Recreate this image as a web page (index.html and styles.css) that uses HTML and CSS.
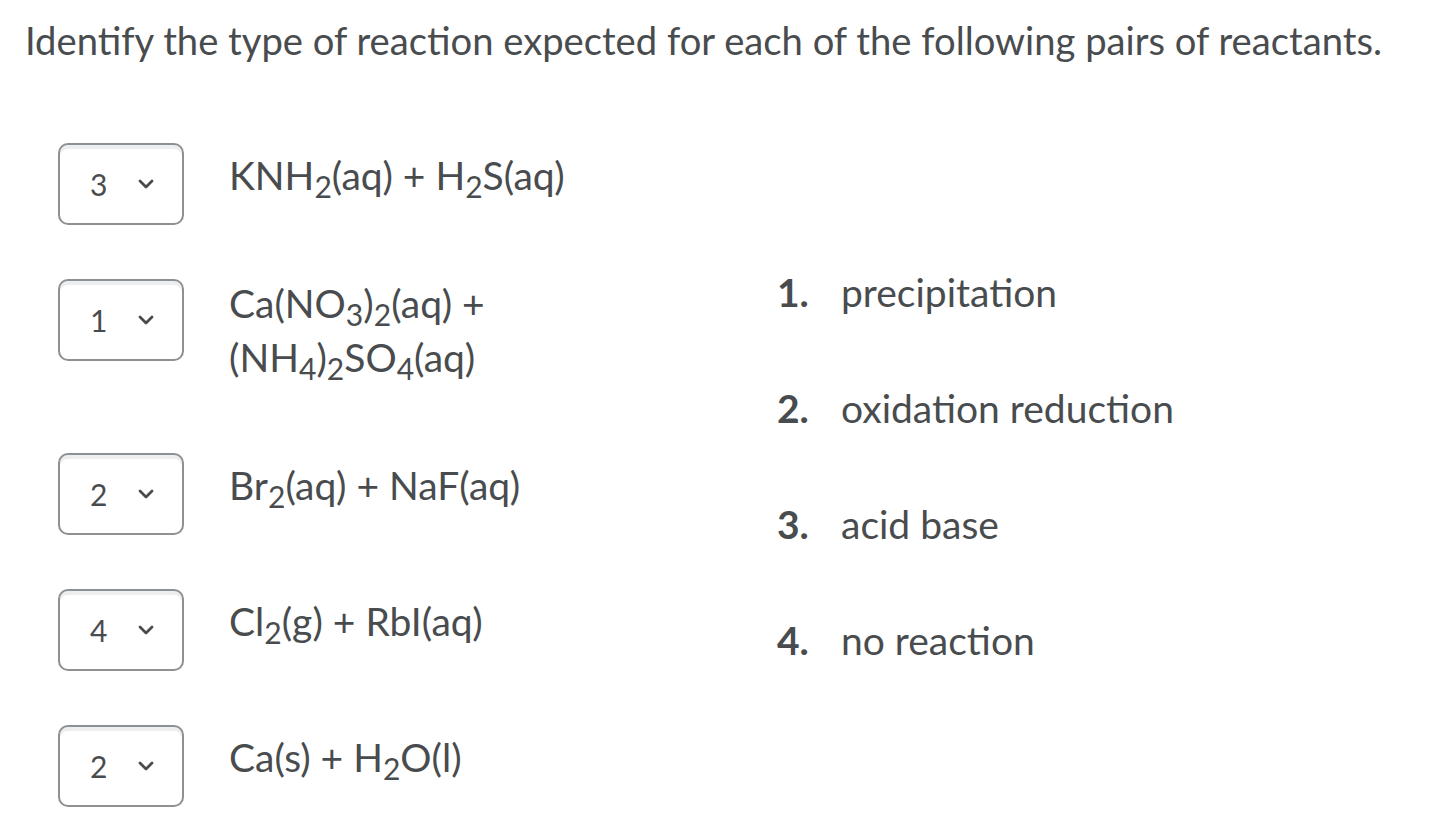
FILE: index.html
```html
<!DOCTYPE html>
<html lang="en">
<head>
    <meta charset="UTF-8">
    <title>Matching question</title>
    <link rel="stylesheet" href="styles.css">
</head>
<body>
    <div class="question">
        <p class="prompt">Identify the type of reaction expected for each of the following pairs of reactants.</p>

        <div class="matching">
            <div class="pairs">
                <div class="pair">
                    <div class="choice"><span>3</span>
                        <svg viewBox="0 0 16 10" class="chevron"><path d="M2 2 L8 8 L14 2" /></svg>
                    </div>
                    <div class="reactants">KNH<sub>2</sub>(aq) + H<sub>2</sub>S(aq)</div>
                </div>
                <div class="pair">
                    <div class="choice"><span>1</span>
                        <svg viewBox="0 0 16 10" class="chevron"><path d="M2 2 L8 8 L14 2" /></svg>
                    </div>
                    <div class="reactants">Ca(NO<sub>3</sub>)<sub>2</sub>(aq) +<br>(NH<sub>4</sub>)<sub>2</sub>SO<sub>4</sub>(aq)</div>
                </div>
                <div class="pair">
                    <div class="choice"><span>2</span>
                        <svg viewBox="0 0 16 10" class="chevron"><path d="M2 2 L8 8 L14 2" /></svg>
                    </div>
                    <div class="reactants">Br<sub>2</sub>(aq) + NaF(aq)</div>
                </div>
                <div class="pair">
                    <div class="choice"><span>4</span>
                        <svg viewBox="0 0 16 10" class="chevron"><path d="M2 2 L8 8 L14 2" /></svg>
                    </div>
                    <div class="reactants">Cl<sub>2</sub>(g) + RbI(aq)</div>
                </div>
                <div class="pair">
                    <div class="choice"><span>2</span>
                        <svg viewBox="0 0 16 10" class="chevron"><path d="M2 2 L8 8 L14 2" /></svg>
                    </div>
                    <div class="reactants">Ca(s) + H<sub>2</sub>O(l)</div>
                </div>
            </div>

            <ol class="answers">
                <li><b>1.</b><span>precipitation</span></li>
                <li><b>2.</b><span>oxidation reduction</span></li>
                <li><b>3.</b><span>acid base</span></li>
                <li><b>4.</b><span>no reaction</span></li>
            </ol>
        </div>
    </div>
</body>
</html>
```

FILE: styles.css
```css
body {
    margin: 0;
    background-color: #ffffff;
    font-family: 'Lato', sans-serif;
    color: #494c4e;
}

.question {
    padding: 11px 25px 0 25px;
}

.prompt {
    margin: 0;
    font-size: 38.2px;
    line-height: 58px;
}

.matching {
    display: flex;
    align-items: center;
    margin-top: 38px;
}

.pairs {
    width: 719px;
    padding-left: 33px;
}

/* dropdown sits at the top, the formula is centred in the row */
.pair {
    display: flex;
    align-items: center;
    min-height: 136px;
}

.choice {
    align-self: flex-start;
    margin-top: 36px;
    box-sizing: border-box;
    width: 126px;
    height: 82px;
    border: 2px solid #8d9194;
    border-radius: 10px;
    box-shadow: inset 0 4px 0 0 rgba(181, 189, 194, 0.25);
    display: flex;
    align-items: center;
    padding-left: 30px;
    font-size: 30px;
}

.choice span {
    width: 48px;
}

.chevron {
    width: 16px;
    height: 10px;
    fill: none;
    stroke: #494c4e;
    stroke-width: 2.8;
    stroke-linecap: round;
    stroke-linejoin: round;
}

.reactants {
    margin-left: 45px;
    padding: 33px 0;
    font-size: 39px;
    line-height: 54px;
}

sub {
    font-size: 0.77em;
    line-height: 0;
    vertical-align: -0.26em;
}

.answers {
    list-style: none;
    margin: 0;
    padding: 0;
}

.answers li {
    display: flex;
    font-size: 39px;
    line-height: 54px;
    margin-bottom: 62px;
}

.answers li:last-child {
    margin-bottom: 0;
}

.answers b {
    width: 64px;
}
```
